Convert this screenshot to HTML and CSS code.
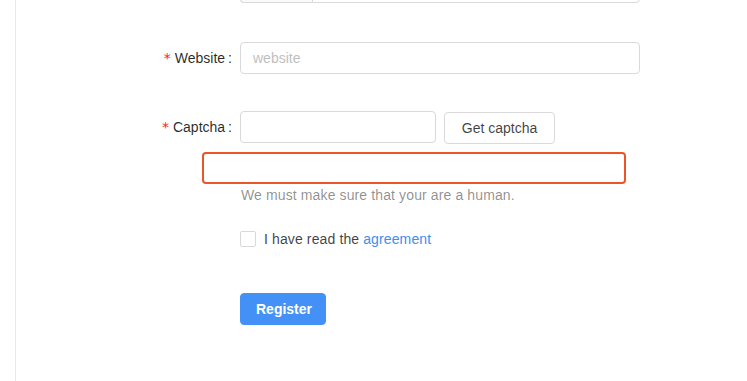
FILE: index.html
```html
<!DOCTYPE html>
<html lang="en">
<head>
  <meta charset="UTF-8">
  <meta name="viewport" content="width=device-width, initial-scale=1.0">
  <title>Register</title>
  <link rel="stylesheet" href="styles.css">
</head>
<body>

  <div class="page">
    <form class="form">

      <!-- phone row (scrolled mostly out of view) -->
      <div class="row first">
        <div class="label"></div>
        <div class="control">
          <div class="group">
            <span class="addon"></span>
            <input class="input flat" type="text">
          </div>
        </div>
      </div>

      <div class="row website">
        <label class="label"><span class="req">*</span>Website<span class="colon">:</span></label>
        <div class="control">
          <input class="input" type="text" placeholder="website">
        </div>
      </div>

      <div class="row captcha">
        <label class="label"><span class="req">*</span>Captcha<span class="colon">:</span></label>
        <div class="control split">
          <input class="input short" type="text">
          <button type="button" class="btn">Get captcha</button>
        </div>
      </div>

      <div class="row">
        <div class="label"></div>
        <div class="control">
          <div class="highlight"></div>
          <p class="extra">We must make sure that your are a human.</p>
        </div>
      </div>

      <div class="row agree">
        <div class="label"></div>
        <div class="control">
          <label class="check"><span class="box"></span>I have read the <a href="#">agreement</a></label>
        </div>
      </div>

      <div class="row submit">
        <div class="label"></div>
        <div class="control">
          <button type="button" class="btn primary">Register</button>
        </div>
      </div>

    </form>
  </div>

</body>
</html>
```

FILE: styles.css
```css
body { margin: 0; padding: 0; font-family: "Liberation Sans", Arial, sans-serif; font-size: 14px; color: rgba(0,0,0,.85); background: #fff; overflow: hidden; }
.page { display: flow-root; margin-left: 15px; height: 381px; border-left: 1px solid #e8e8e8; }
.form { margin: 0; }

.row { display: flex; align-items: center; }
.row.first { margin-top: -29px; }
.row.website { margin-top: 39px; }
.row.captcha { margin-top: 37px; align-items: flex-start; }
.row.captcha .label { line-height: 32px; }
.row.agree { margin-top: 22px; }
.row.submit { margin-top: 43px; }

.label { width: 224px; flex: none; text-align: right; white-space: nowrap; }
.req { color: #f5222d; margin-right: 4px; font-family: SimSun, "DejaVu Sans", sans-serif; }
.colon { margin: 0 8px 0 3px; }

.control { width: 400px; }
.control.split { display: flex; gap: 8px; }

.input { box-sizing: border-box; width: 100%; height: 32px; padding: 4px 12px; border: 1px solid #d9d9d9; border-radius: 4px; font: inherit; color: inherit; outline: none; }
.input::placeholder { color: #bfbfbf; }
.input.short { width: 196px; }

.group { display: flex; }
.addon { box-sizing: border-box; flex: none; width: 72px; height: 32px; background: #fafafa; border: 1px solid #d9d9d9; border-right: none; border-radius: 4px 0 0 4px; }
.input.flat { flex: 1; min-width: 0; border-radius: 0 4px 4px 0; }

.btn { box-sizing: border-box; height: 32px; padding: 0 15px; border: 1px solid #d9d9d9; border-radius: 4px; background: #fff; font: inherit; color: rgba(0,0,0,.75); cursor: pointer; }
.captcha .btn { width: 111px; margin-top: 1px; }
.btn.primary { width: 86px; background: #4391f7; border-color: #4391f7; color: #fff; font-weight: bold; }

.highlight { box-sizing: border-box; margin-top: 8px; margin-left: -38px; width: 424px; height: 32px; border: 2px solid #ea5529; border-radius: 4px; }
.extra { margin: 0; line-height: 22px; color: rgba(0,0,0,.45); padding-left: 1px; letter-spacing: .12px; }

.check { display: flex; align-items: center; line-height: 22px; color: rgba(0,0,0,.75); letter-spacing: .12px; }
.box { box-sizing: border-box; width: 16px; height: 16px; border: 1px solid #d9d9d9; border-radius: 2px; margin-right: 8px; }
.check a { color: #3c8ef0; text-decoration: none; margin-left: 4px; }
```
